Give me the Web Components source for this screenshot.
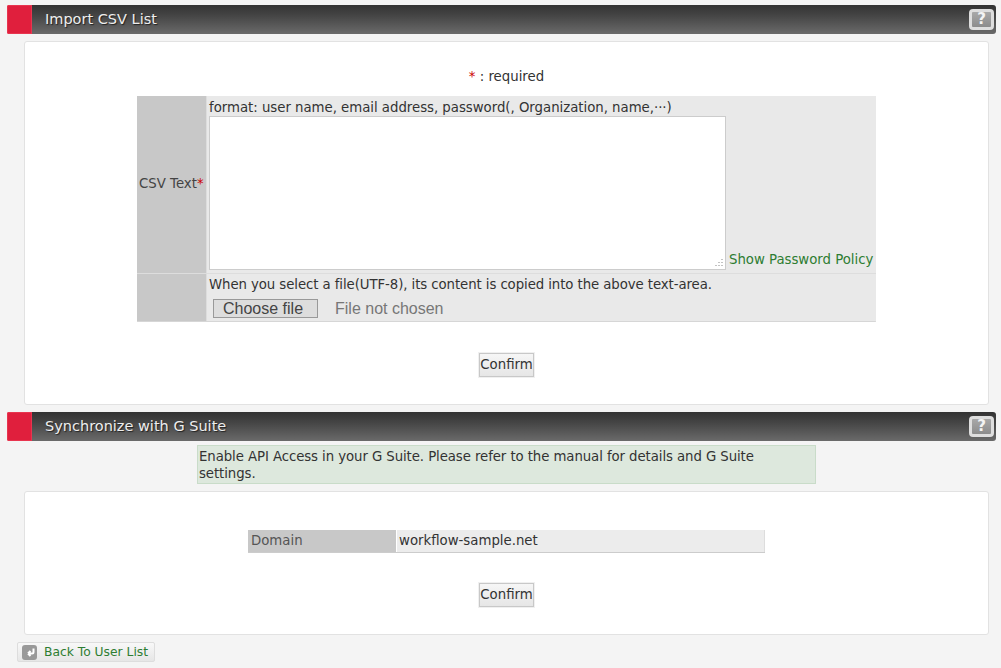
<!DOCTYPE html>
<html lang="en">
<head>
<meta charset="UTF-8">
<title>Import CSV List</title>
<style>
  html, body { margin: 0; height: 100%; overflow: hidden; }
  body {
    background: #f4f4f4;
    color: #333;
    font: 13.3px/17px "DejaVu Sans", sans-serif;
    padding: 5px 5px 0 7px;
    box-sizing: border-box;
  }
</style>
</head>
<body>
  <section-bar title-text="Import CSV List"></section-bar>
  <white-panel style="height:364px;margin-top:7px">
    <div style="text-align:center;margin-top:26px;height:28px"><span style="color:#c00">*</span> : required</div>
    <csv-form></csv-form>
    <div style="text-align:center;margin-top:31px"><confirm-button>Confirm</confirm-button></div>
  </white-panel>
  <section-bar title-text="Synchronize with G Suite" style="margin-top:7px"></section-bar>
  <note-box>Enable API Access in your G Suite. Please refer to the manual for details and G Suite settings.</note-box>
  <white-panel style="height:144px;margin-top:7px">
    <domain-row label="Domain" value="workflow-sample.net"></domain-row>
    <div style="text-align:center;margin-top:30px"><confirm-button>Confirm</confirm-button></div>
  </white-panel>
  <back-link>Back To User List</back-link>

<script>
  class SectionBar extends HTMLElement {
    constructor() {
      super();
      this.attachShadow({ mode: 'open' });
      this.shadowRoot.innerHTML = `
        <style>
          :host { display: flex; height: 29px; width: 989px; align-items: stretch; }
          .red { width: 25px; background: #e01f3d; border-radius: 2px 0 0 2px; box-shadow: inset 0 0 0 1px #e8354f; }
          .bar {
            flex: 1; display: flex; align-items: center; justify-content: space-between;
            padding: 0 2px 0 13px; border-radius: 0 3px 3px 0;
            background: linear-gradient(#333 0, #444 35%, #6a6a6a 100%);
          }
          h2 { margin: 0; font: normal 14.5px/26px "DejaVu Sans", sans-serif; color: #eee; text-shadow: 1px 1px 1px #222; padding-bottom: 1px; }
          .help {
            width: 25px; height: 21px; box-sizing: border-box; margin-top: -1px;
            border: 3px solid #dedede; border-radius: 4px; background: linear-gradient(#a8a8a8, #8c8c8c);
            color: #f4f4f4; font: bold 15px/15px "DejaVu Sans", sans-serif; text-align: center;
          }
        </style>
        <div class="red"></div>
        <div class="bar"><h2></h2><div class="help">?</div></div>`;
    }
    connectedCallback() {
      this.shadowRoot.querySelector('h2').textContent = this.getAttribute('title-text');
    }
  }
  customElements.define('section-bar', SectionBar);

  class WhitePanel extends HTMLElement {
    constructor() {
      super();
      this.attachShadow({ mode: 'open' });
      this.shadowRoot.innerHTML = `
        <style>
          :host {
            display: block; box-sizing: border-box; width: 965px; margin-left: 17px;
            background: #fff; border: 1px solid #e2e2e2; border-radius: 3px; overflow: hidden;
          }
        </style>
        <slot></slot>`;
    }
  }
  customElements.define('white-panel', WhitePanel);

  class ConfirmButton extends HTMLElement {
    constructor() {
      super();
      this.attachShadow({ mode: 'open' });
      this.shadowRoot.innerHTML = `
        <style>
          :host {
            display: inline-block; box-sizing: border-box; width: 55px; height: 24px;
            border: 1px solid #c8c8c8; background: linear-gradient(#f6f6f6, #e6e6e6);
            line-height: 22px; text-align: center; color: #333;
            box-shadow: 0 0 0 1px #f0f0f0;
          }
        </style>
        <slot></slot>`;
    }
  }
  customElements.define('confirm-button', ConfirmButton);

  class CsvForm extends HTMLElement {
    constructor() {
      super();
      this.attachShadow({ mode: 'open' });
      this.shadowRoot.innerHTML = `
        <style>
          :host {
            display: grid; width: 738px; margin-left: 112px;
            grid-template-columns: 69px 1fr; grid-template-rows: 177px 47px;
            row-gap: 1px; column-gap: 1px; background: #ddd;
            border-bottom: 1px solid #d6d6d6; border-right: 1px solid #ddd; line-height: 17px;
          }
          .th { background: #c8c8c8; padding-left: 2px; display: flex; align-items: center; white-space: nowrap; color: #444; }
          .th.first { padding-bottom: 2px; height: 175px; }
          .td { background: #e9e9e9; padding: 3px 2px 0 2px; color: #333; letter-spacing: -0.02px; }
          .td.second { padding-top: 2px; letter-spacing: -0.08px; }
          .th i { color: #c00; font-style: normal; }
          .top { display: flex; align-items: flex-end; }
          .box {
            width: 517px; height: 154px; box-sizing: border-box; background: #fff;
            border: 1px solid #ccc; position: relative; flex: none;
          }
          .grip { position: absolute; right: 2px; bottom: 2px; }
          a { color: #2e7d32; margin: 0 1px 2px 3px; white-space: nowrap; }
          .file { display: flex; align-items: center; margin: 6px 0 0 4px; font: 16px/18px "Liberation Sans", sans-serif; letter-spacing: 0; }
          .choose { width: 105px; height: 19px; box-sizing: border-box; border: 1px solid #999; background: #ddd; padding-left: 9px; line-height: 17px; color: #444; }
          .none { margin-left: 17px; color: #777; }
        </style>
        <div class="th first">CSV Text<i>*</i></div>
        <div class="td">
          <div>format: user name, email address, password(, Organization, name,···)</div>
          <div class="top">
            <div class="box"><svg class="grip" width="9" height="9" viewBox="0 0 9 9"><path d="M8 1v1M5 4v1M8 4v1M2 7v1M5 7v1M8 7v1" stroke="#aaa" stroke-width="1.4"/></svg></div>
            <a>Show Password Policy</a>
          </div>
        </div>
        <div class="th"></div>
        <div class="td second">
          <div>When you select a file(UTF-8), its content is copied into the above text-area.</div>
          <div class="file"><span class="choose">Choose file</span><span class="none">File not chosen</span></div>
        </div>`;
    }
  }
  customElements.define('csv-form', CsvForm);

  class NoteBox extends HTMLElement {
    constructor() {
      super();
      this.attachShadow({ mode: 'open' });
      this.shadowRoot.innerHTML = `
        <style>
          :host {
            display: block; box-sizing: border-box; width: 619px; height: 39px;
            margin: 4px 0 0 190px; padding: 2px 1px;
            background: #dde8dd; border: 1px solid #c9dcc9; line-height: 17px; color: #333;
            letter-spacing: -0.08px;
          }
        </style>
        <slot></slot>`;
    }
  }
  customElements.define('note-box', NoteBox);

  class DomainRow extends HTMLElement {
    constructor() {
      super();
      this.attachShadow({ mode: 'open' });
      this.shadowRoot.innerHTML = `
        <style>
          :host {
            display: grid; grid-template-columns: 148px 1fr; column-gap: 1px;
            width: 517px; height: 23px; margin: 38px 0 0 223px; box-sizing: border-box;
            border-bottom: 1px solid #ccc; line-height: 22px;
          }
          .k { background: #c8c8c8; padding-left: 3px; color: #555; }
          .v { background: #ececec; padding-left: 2px; color: #333; border-right: 1px solid #ddd; }
        </style>
        <div class="k"></div><div class="v"></div>`;
    }
    connectedCallback() {
      this.shadowRoot.querySelector('.k').textContent = this.getAttribute('label');
      this.shadowRoot.querySelector('.v').textContent = this.getAttribute('value');
    }
  }
  customElements.define('domain-row', DomainRow);

  class BackLink extends HTMLElement {
    constructor() {
      super();
      this.attachShadow({ mode: 'open' });
      this.shadowRoot.innerHTML = `
        <style>
          :host {
            display: flex; align-items: center; box-sizing: border-box; width: 138px; height: 20px;
            margin: 7px 0 0 10px; padding-left: 4px;
            background: linear-gradient(#f8f8f8, #e6e6e6); border: 1px solid #ddd; border-radius: 2px;
            color: #2e7d32; font-size: 12.3px;
          }
          svg { margin-right: 7px; flex: none; }
        </style>
        <svg width="15" height="15" viewBox="0 0 15 15"><rect width="15" height="15" rx="3" fill="#999"/><path d="M11.5 3.5v3.5a1.5 1.5 0 0 1-1.5 1.5H6M6 8.5l2.5-2.5M6 8.5l2.5 2.5" fill="none" stroke="#fff" stroke-width="2"/></svg>
        <slot></slot>`;
    }
  }
  customElements.define('back-link', BackLink);
</script>
</body>
</html>
